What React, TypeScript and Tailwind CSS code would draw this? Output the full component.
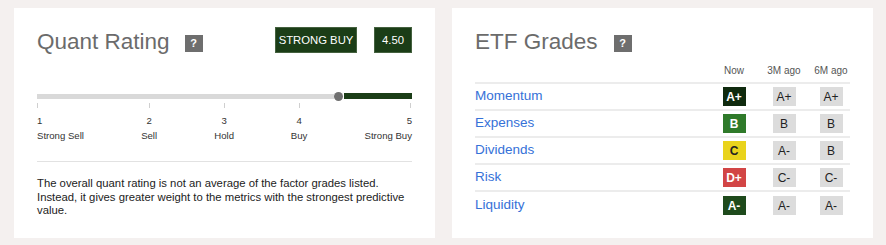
import React from 'react';

const font = { fontFamily: '"Liberation Sans", Arial, sans-serif' };

const scale = [
  { n: '1', label: 'Strong Sell', pos: 'left-0', align: '' },
  { n: '2', label: 'Sell', pos: 'left-[29.9%] -translate-x-1/2', align: 'text-center' },
  { n: '3', label: 'Hold', pos: 'left-[49.9%] -translate-x-1/2', align: 'text-center' },
  { n: '4', label: 'Buy', pos: 'left-[69.9%] -translate-x-1/2', align: 'text-center' },
  { n: '5', label: 'Strong Buy', pos: 'right-0', align: 'text-right' },
];

const tickPos = ['left-0', 'left-[29.9%]', 'left-[49.9%]', 'left-[69.9%]', 'right-[1px]'];

type Grade = { name: string; now: string; nowCls: string; m3: string; m6: string };

const grades: Grade[] = [
  { name: 'Momentum', now: 'A+', nowCls: 'bg-[#0f2a0e] text-white', m3: 'A+', m6: 'A+' },
  { name: 'Expenses', now: 'B', nowCls: 'bg-[#2f7a2a] text-white', m3: 'B', m6: 'B' },
  { name: 'Dividends', now: 'C', nowCls: 'bg-[#e9d31c] text-[#222]', m3: 'A-', m6: 'B' },
  { name: 'Risk', now: 'D+', nowCls: 'bg-[#d24545] text-white', m3: 'C-', m6: 'C-' },
  { name: 'Liquidity', now: 'A-', nowCls: 'bg-[#1e4a1c] text-white', m3: 'A-', m6: 'A-' },
];

const HelpBox = () => (
  <div className="w-[18px] h-[17px] bg-[#6e6e6e] text-white text-[11px] font-bold flex items-center justify-center mt-[8px]">
    ?
  </div>
);

const QuantRating = () => (
  <div className="w-[421px] h-[230px] bg-white pt-[19px] px-[23px]">
    <div className="flex justify-between h-[26px]">
      <div className="flex items-start gap-[15px]">
        <h2 className="text-[22.5px] leading-[26px] mt-[2px] text-[#6b6b6b]">Quant Rating</h2>
        <HelpBox />
      </div>
      <div className="flex gap-[17px]">
        <div className="h-[26px] w-[82px] bg-[#1b3d17] border border-[#44613f] text-white text-[11.3px] flex items-center justify-center">
          STRONG BUY
        </div>
        <div className="h-[26px] w-[38px] bg-[#1b3d17] border border-[#44613f] text-white text-[11.3px] flex items-center justify-center">
          4.50
        </div>
      </div>
    </div>

    <div className="flex items-center h-[10px] mt-[38px]">
      <div className="w-[297px] h-[5px] bg-[#d9d9d9]" />
      <div className="w-[9px] h-[9px] rounded-full bg-[#707070] shrink-0" />
      <div className="flex-1 h-[6px] bg-[#1b3d17] ml-[1px]" />
    </div>

    <div className="relative h-[5px] mt-[2px]">
      {tickPos.map((p, i) => (
        <div key={i} className={`absolute top-0 w-px h-[5px] bg-[#cfcfcf] ${p}`} />
      ))}
    </div>

    <div className="relative h-[27px] mt-[7px] text-[9.6px] text-[#333]">
      {scale.map(s => (
        <div key={s.n} className={`absolute top-0 whitespace-nowrap ${s.pos} ${s.align}`}>
          <div className="leading-[12px]">{s.n}</div>
          <div className="leading-[12px] mt-[3px]">{s.label}</div>
        </div>
      ))}
    </div>

    <div className="border-t border-[#e2e2e2] mt-[19px]" />

    <p className="mt-[15px] text-[11.3px] leading-[13.7px] text-[#222]">
      The overall quant rating is not an average of the factor grades listed. Instead, it gives greater weight to the metrics with the strongest predictive value.
    </p>
  </div>
);

const EtfGrades = () => (
  <div className="w-[421px] h-[230px] bg-white pt-[19px] px-[23px]">
    <div className="flex items-start gap-[16px] h-[26px]">
      <h2 className="text-[22.5px] leading-[26px] mt-[2px] text-[#6b6b6b]">ETF Grades</h2>
      <HelpBox />
    </div>

    <div className="grid grid-cols-[1fr_44px_56px_38px] mt-[12px] pb-[5px] border-b-2 border-[#ececec] text-[10px] leading-[12px] text-[#555]">
      <div />
      <div className="text-center">Now</div>
      <div className="text-center">3M ago</div>
      <div className="text-center">6M ago</div>
    </div>

    {grades.map((g, i) => (
      <div
        key={g.name}
        className={`grid grid-cols-[1fr_44px_56px_38px] items-center h-[27px] ${i < grades.length - 1 ? 'border-b-2 border-[#ececec]' : ''}`}
      >
        <a className="text-[13.5px] text-[#3571d8]">{g.name}</a>
        <div className="flex justify-center">
          <span className={`w-[23px] h-[19px] flex items-center justify-center text-[12px] font-bold ${g.nowCls}`}>{g.now}</span>
        </div>
        <div className="flex justify-center">
          <span className="w-[23px] h-[19px] flex items-center justify-center text-[12px] bg-[#dcdcdc] text-[#222]">{g.m3}</span>
        </div>
        <div className="flex justify-center">
          <span className="w-[23px] h-[19px] flex items-center justify-center text-[12px] bg-[#dcdcdc] text-[#222]">{g.m6}</span>
        </div>
      </div>
    ))}
  </div>
);

export default function App() {
  return (
    <div className="w-[886px] h-[245px] bg-[#f4f0ef] pt-[8px] pl-[14px] flex gap-[17px]" style={font}>
      <QuantRating />
      <EtfGrades />
    </div>
  );
}
